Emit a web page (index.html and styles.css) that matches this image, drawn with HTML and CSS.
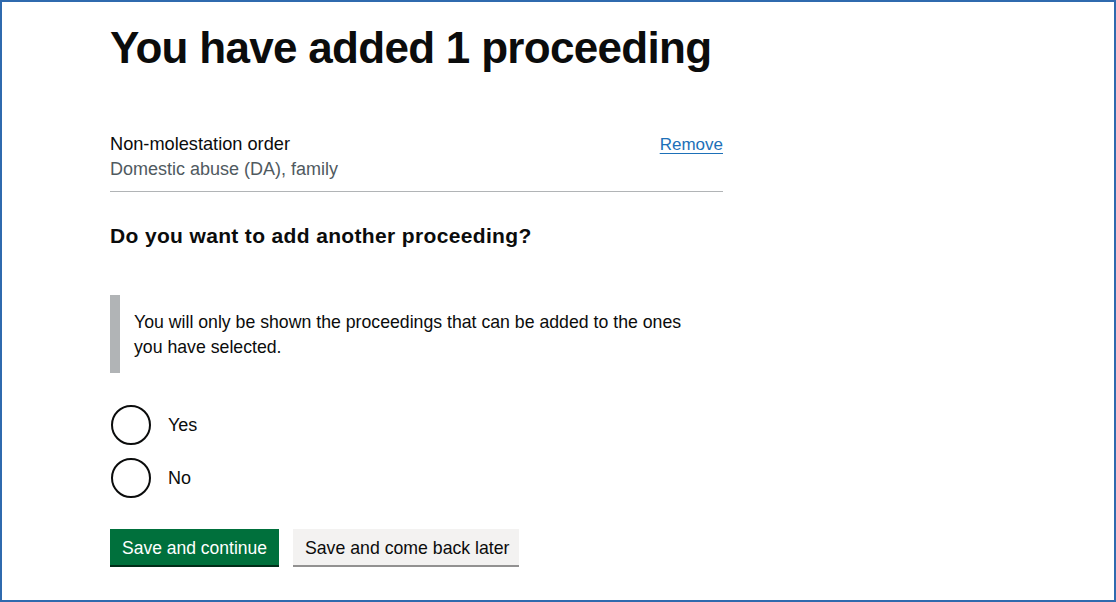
FILE: index.html
```html
<!DOCTYPE html>
<html lang="en">
<head>
<meta charset="utf-8">
<title>You have added 1 proceeding</title>
<link rel="stylesheet" href="styles.css">
</head>
<body>
<div class="frame">
  <main class="main">
    <h1 class="title">You have added 1 proceeding</h1>
    <div class="summary">
      <div class="summary-text">
        <div class="summary-name">Non-molestation order</div>
        <div class="summary-meta">Domestic abuse (DA), family</div>
      </div>
      <a class="link" href="#">Remove</a>
    </div>
    <h2 class="question">Do you want to add another proceeding?</h2>
    <div class="inset">You will only be shown the proceedings that can be added to the ones you have selected.</div>
    <div class="radios">
      <label class="radio"><span class="radio-circle"></span><span class="radio-label">Yes</span></label>
      <label class="radio"><span class="radio-circle"></span><span class="radio-label">No</span></label>
    </div>
    <div class="buttons">
      <button class="btn btn-primary">Save and continue</button>
      <button class="btn btn-secondary">Save and come back later</button>
    </div>
  </main>
</div>
</body>
</html>
```
FILE: styles.css
```css
html, body {
  margin: 0;
  padding: 0;
  height: 100%;
}
body {
  font-family: "Liberation Sans", Arial, sans-serif;
  color: #0b0c0c;
  background: #fff;
}
.frame {
  box-sizing: border-box;
  width: 1116px;
  height: 602px;
  border: 2px solid #2f6aae;
  padding-left: 108px;
  overflow: hidden;
}
.main {
  width: 613px;
}
.title {
  margin: 21px 0 0;
  font-size: 44px;
  line-height: 50px;
  font-weight: 700;
  letter-spacing: -0.7px;
  white-space: nowrap;
}
.summary {
  display: flex;
  justify-content: space-between;
  align-items: flex-start;
  margin-top: 59px;
  padding-bottom: 9px;
  border-bottom: 1px solid #b1b4b6;
}
.summary-name {
  font-size: 18.2px;
  line-height: 25px;
}
.summary-meta {
  font-size: 18px;
  line-height: 25px;
  color: #505a5f;
}
.link {
  font-size: 17px;
  line-height: 25px;
  color: #1d70b8;
  text-decoration: underline;
  text-underline-offset: 3px;
}
.question {
  margin: 29px 0 0;
  font-size: 21px;
  line-height: 30px;
  font-weight: 700;
  letter-spacing: 0.35px;
}
.inset {
  margin-top: 44px;
  border-left: 10px solid #b1b4b6;
  padding: 15px 0 13px 14px;
  font-size: 17.7px;
  line-height: 25px;
  width: 560px;
}
.radios {
  margin-top: 32px;
  display: flex;
  flex-direction: column;
  gap: 13px;
}
.radio {
  display: flex;
  align-items: center;
  gap: 17px;
  font-size: 18px;
  line-height: 25px;
}
.radio-circle {
  box-sizing: border-box;
  width: 40px;
  height: 40px;
  border: 2px solid #0b0c0c;
  border-radius: 50%;
  margin-left: 1px;
}
.buttons {
  margin-top: 31px;
  display: flex;
  gap: 14px;
}
.btn {
  font-family: "Liberation Sans", Arial, sans-serif;
  font-size: 17.5px;
  line-height: 20px;
  padding: 9px 12px 7px;
  border: 0;
  border-radius: 0;
  cursor: pointer;
}
.btn-primary {
  background: #00703c;
  color: #fff;
  box-shadow: 0 2px 0 #002d18;
}
.btn-secondary {
  background: #f3f2f1;
  color: #0b0c0c;
  box-shadow: 0 2px 0 #929191;
  font-size: 17.7px;
  padding-left: 12px;
  padding-right: 9px;
}
```
